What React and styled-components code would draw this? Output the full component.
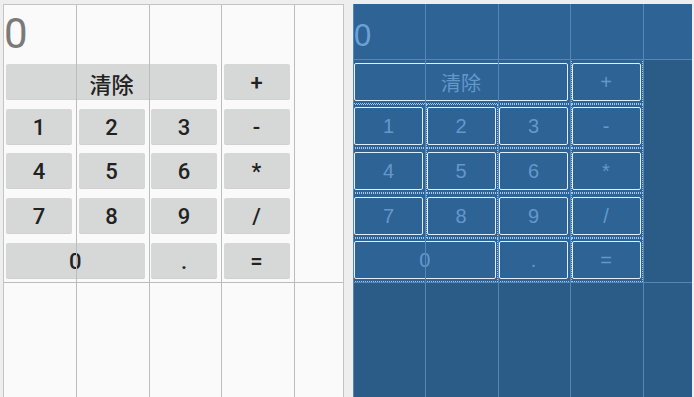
import React from 'react';
import styled, { createGlobalStyle } from 'styled-components';

const GlobalStyle = createGlobalStyle`
  html, body {
    margin: 0;
    padding: 0;
    background: #eeeeee;
  }
  body {
    font-family: Roboto, "Noto Sans CJK SC", sans-serif;
    overflow: hidden;
  }
`;

const keys = [
  { label: '清除', span: 3 },
  { label: '+' },
  { label: '1' },
  { label: '2' },
  { label: '3' },
  { label: '-' },
  { label: '4' },
  { label: '5' },
  { label: '6' },
  { label: '*' },
  { label: '7' },
  { label: '8' },
  { label: '9' },
  { label: '/' },
  { label: '0', span: 2 },
  { label: '.' },
  { label: '=' },
];

const cellCols = [72, 144.5, 217, 289.5];

// layout editor grid guides, drawn over the preview
const guides = (color, cols, rows) => {
  const layers = [...cols, ...rows].map(() => `linear-gradient(${color}, ${color})`);
  const pos = [...cols.map((x) => `${x}px 0`), ...rows.map((y) => `0 ${y}px`)];
  const size = [...cols.map(() => '1px 100%'), ...rows.map(() => '100% 1px')];
  return `
    background-image: ${layers.join(', ')};
    background-position: ${pos.join(', ')};
    background-size: ${size.join(', ')};
    background-repeat: no-repeat;
  `;
};

const Stage = styled.div`
  display: flex;
  gap: 9px;
  width: 694px;
  height: 397px;
  padding: 4px 0 0 3px;
  box-sizing: border-box;
  overflow: hidden;
`;

const DesignPanel = styled.div`
  position: relative;
  flex: none;
  width: 341px;
  height: 400px;
  box-sizing: border-box;
  border: 1px solid #c4c4c4;
  border-bottom: none;
  background: #fafafa;
`;

const BlueprintPanel = styled.div`
  position: relative;
  flex: none;
  width: 339px;
  height: 400px;
  background: #2b5b87;
`;

const Guides = styled.div`
  position: absolute;
  inset: 0;
  pointer-events: none;
  ${(p) => guides(p.$color, p.$cols, p.$rows)}
`;

const Display = styled.div`
  height: 54px;
  padding-top: 3px;
  box-sizing: border-box;
  font: 400 42px/51px Roboto, sans-serif;
  color: #7a7a7a;
`;

const BlueDisplay = styled.div`
  height: 55px;
  padding-top: 9px;
  padding-left: 1px;
  box-sizing: border-box;
  background: #2e6395;
  font: 400 31px/46px "Liberation Sans", sans-serif;
  color: #6ca1d6;
`;

const KeyGrid = styled.div`
  display: grid;
  grid-template-columns: repeat(4, 72.5px);
  grid-auto-rows: 44.7px;
  width: 290px;
  background: ${(p) => p.$bg || 'transparent'};
`;

const KeyCell = styled.div`
  grid-column: span ${(p) => p.$span || 1};
  display: flex;
  box-sizing: border-box;
  padding: 5px 4.5px 4.7px 2px;
`;

const Key = styled.button`
  flex: 1;
  display: flex;
  align-items: center;
  justify-content: center;
  margin: 0;
  padding: 2px 0 0;
  border: none;
  border-radius: 2px;
  background: #d6d7d7;
  box-shadow: 0 1px 0 #cfd0d0;
  font: 500 22px Roboto, "Noto Sans CJK SC", sans-serif;
  color: #222222;
`;

const BlueCell = styled.div`
  grid-column: span ${(p) => p.$span || 1};
  display: flex;
  box-sizing: border-box;
  border: 1px dotted #a3c6ea;
  padding: 2.5px 1.5px 2px 0;
`;

const BlueKey = styled.div`
  flex: 1;
  display: flex;
  align-items: center;
  justify-content: center;
  box-sizing: border-box;
  padding-top: 1px;
  border: 1.5px solid #e2eefb;
  border-radius: 2px;
  font: 400 20px "Liberation Sans", "Noto Sans CJK SC", sans-serif;
  color: #6398cd;
`;

function DesignView() {
  return (
    <DesignPanel>
      <Display>0</Display>
      <KeyGrid>
        {keys.map((k) => (
          <KeyCell key={k.label} $span={k.span}>
            <Key>{k.label}</Key>
          </KeyCell>
        ))}
      </KeyGrid>
      <Guides $color="#bcbcbc" $cols={cellCols} $rows={[277]} />
    </DesignPanel>
  );
}

function BlueprintView() {
  return (
    <BlueprintPanel>
      <BlueDisplay>0</BlueDisplay>
      <KeyGrid $bg="#2e6395">
        {keys.map((k) => (
          <BlueCell key={k.label} $span={k.span}>
            <BlueKey>{k.label}</BlueKey>
          </BlueCell>
        ))}
      </KeyGrid>
      <Guides $color="#5686b3" $cols={[0, ...cellCols]} $rows={[55, 278]} />
    </BlueprintPanel>
  );
}

export default function App() {
  return (
    <>
      <GlobalStyle />
      <Stage>
        <DesignView />
        <BlueprintView />
      </Stage>
    </>
  );
}
